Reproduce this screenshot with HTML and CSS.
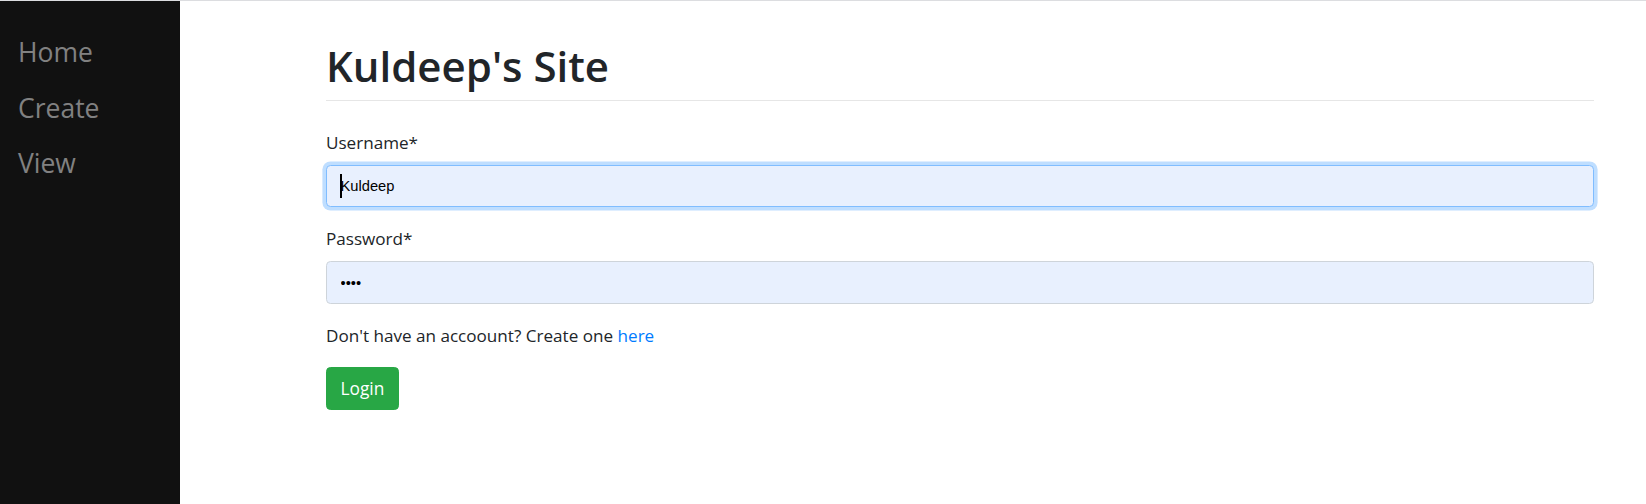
FILE: index.html
```html
<!DOCTYPE html>
<html lang="en">
<head>
<meta charset="utf-8">
<title>Kuldeep's Site</title>
<link rel="stylesheet" href="styles.css">
</head>
<body>
<div class="page">
  <nav class="sidenav">
    <a href="#">Home</a>
    <a href="#">Create</a>
    <a href="#">View</a>
  </nav>
  <main class="main">
    <h1 class="title">Kuldeep's Site</h1>
    <form class="login-form">
      <div class="form-group">
        <label class="form-label" for="username">Username*</label>
        <div class="field-wrap">
          <input class="form-control is-focused" id="username" type="text" value="Kuldeep">
          <span class="caret"></span>
        </div>
      </div>
      <div class="form-group">
        <label class="form-label" for="password">Password*</label>
        <input class="form-control" id="password" type="password" value="abcd">
      </div>
      <p class="signup-note">Don't have an accoount? Create one <a class="link" href="#">here</a></p>
      <button class="btn-login" type="button">Login</button>
    </form>
  </main>
</div>
</body>
</html>
```
FILE: styles.css
```css
* { box-sizing: border-box; }

html, body {
  margin: 0;
  padding: 0;
  height: 100%;
}

body {
  border-top: 1px solid #dcdde0;
  background: #ffffff;
  font-family: "Open Sans", "Noto Sans", sans-serif;
  color: #212529;
}

.page {
  display: flex;
  min-height: 503px;
  height: 100%;
}

.sidenav {
  width: 180px;
  flex: 0 0 180px;
  background: #111111;
  padding-top: 24px;
}

.sidenav a {
  display: block;
  padding: 6px 9px 6px 18px;
  font-size: 26.5px;
  line-height: 43.6px;
  color: #818181;
  text-decoration: none;
}

.main {
  flex: 1;
  padding: 39px 52px 0 146px;
}

.title {
  margin: 0 0 28px 0;
  padding-bottom: 8px;
  border-bottom: 1px solid #e6e6e6;
  font-size: 42px;
  line-height: 51.6px;
  font-weight: 600;
  color: #212529;
}

.login-form {
  margin: 0;
}

.form-group {
  margin-bottom: 18px;
}

.form-label {
  display: block;
  margin-bottom: 9px;
  font-size: 17.1px;
  line-height: 27px;
  color: #212529;
}

.field-wrap {
  position: relative;
}

.form-control {
  display: block;
  width: 100%;
  height: 42.75px;
  padding: 6.75px 13.5px;
  font-family: "Liberation Sans", Arial, sans-serif;
  font-size: 14.7px;
  color: #000000;
  background: #e8f0fe;
  border: 1px solid #ced4da;
  border-radius: 4.5px;
  outline: none;
}

.form-control.is-focused {
  border-color: #80bdff;
  box-shadow: 0 0 0 3.6px rgba(0, 123, 255, 0.25);
}

.caret {
  position: absolute;
  left: 14px;
  top: 9.5px;
  width: 2px;
  height: 23.5px;
  background: #000000;
}

.signup-note {
  margin: 0 0 18px 0;
  font-size: 17.1px;
  line-height: 27px;
  color: #212529;
}

.link {
  color: #007bff;
  text-decoration: none;
}

.btn-login {
  display: inline-block;
  height: 42.75px;
  padding: 6.75px 13.5px;
  font-family: "Open Sans", "Noto Sans", sans-serif;
  font-size: 17.3px;
  line-height: 27px;
  color: #ffffff;
  background: #28a745;
  border: 1px solid #28a745;
  border-radius: 4.5px;
  cursor: pointer;
}
```
